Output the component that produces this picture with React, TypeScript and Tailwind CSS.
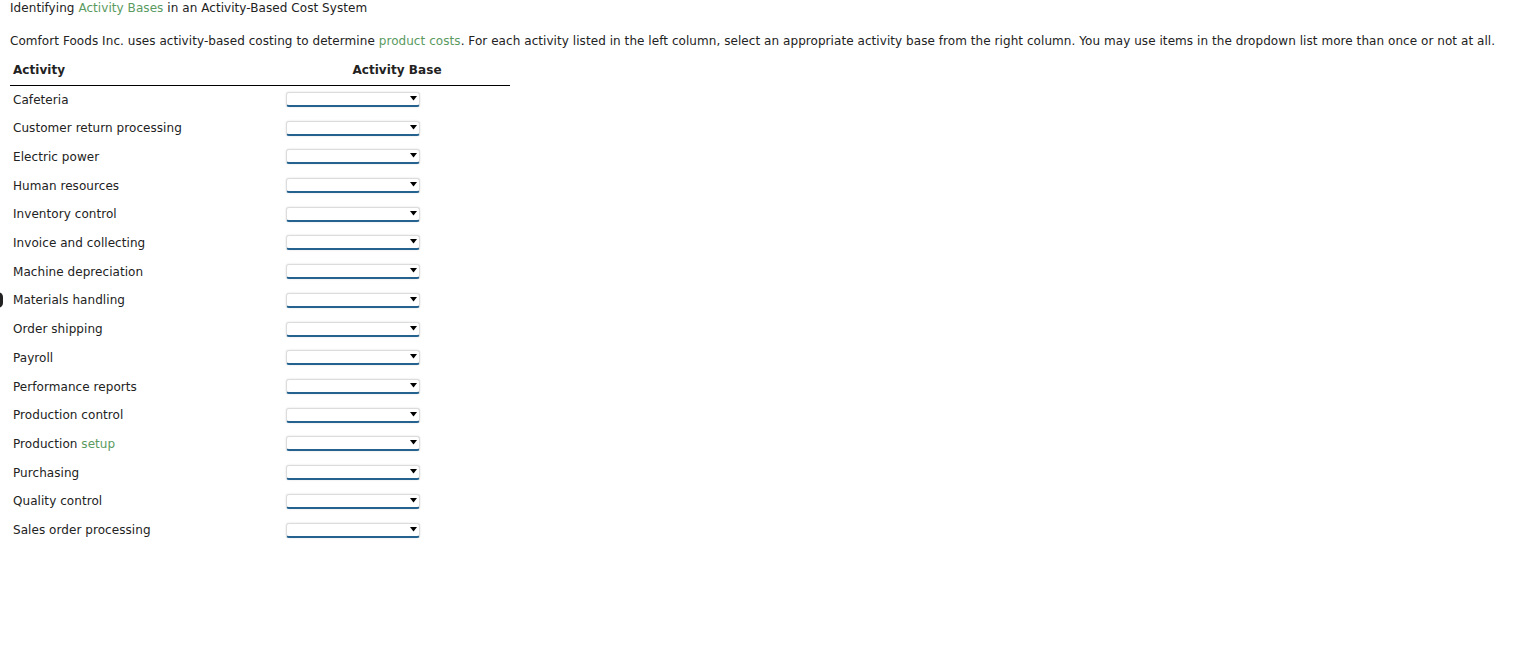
import React from 'react';

const activities = [
  'Cafeteria',
  'Customer return processing',
  'Electric power',
  'Human resources',
  'Inventory control',
  'Invoice and collecting',
  'Machine depreciation',
  'Materials handling',
  'Order shipping',
  'Payroll',
  'Performance reports',
  'Production control',
  'Production setup',
  'Purchasing',
  'Quality control',
  'Sales order processing',
];

function Select() {
  return (
    <div className="relative w-[134px] h-[15px] rounded-[3px] bg-white border border-[#dcdcdc] border-b-2 border-b-[#25628f] shadow-[0_0_2px_rgba(0,0,0,0.15)]">
      <svg className="absolute right-[2px] top-[3px]" width="7" height="5" viewBox="0 0 7 5">
        <path d="M0 0 L7 0 L3.5 4.5 Z" fill="#000" />
      </svg>
    </div>
  );
}

function Label({ name }: { name: string }) {
  if (name === 'Production setup') {
    return (
      <span>
        Production <span className="text-[#5a9a5f]">setup</span>
      </span>
    );
  }
  return <span>{name}</span>;
}

export default function App() {
  return (
    <div className="relative min-h-[646px] bg-white text-[#222] text-[12px] leading-[16px] tracking-[0.06px] font-['DejaVu_Sans','Verdana',sans-serif]">
      <div className="px-[10px]">
        <p>
          Identifying <span className="text-[#5a9a5f]">Activity Bases</span> in an Activity-Based Cost System
        </p>
        <p className="mt-[17px]">
          Comfort Foods Inc. uses activity-based costing to determine{' '}
          <span className="text-[#5a9a5f]">product costs</span>. For each activity listed in the left column, select an
          appropriate activity base from the right column. You may use items in the dropdown list more than once or not at
          all.
        </p>

        <table className="mt-[7px] w-[500px] border-collapse">
          <thead>
            <tr className="border-b border-black">
              <th className="h-[29px] text-left font-bold pl-[3px] w-[274px]">Activity</th>
              <th className="h-[29px] text-center font-bold">Activity Base</th>
            </tr>
          </thead>
          <tbody>
            {activities.map((a) => (
              <tr key={a} className="h-[28.73px]">
                <td className="pl-[3px] align-middle">
                  <Label name={a} />
                </td>
                <td className="pl-[2px] align-middle">
                  <Select />
                </td>
              </tr>
            ))}
          </tbody>
        </table>
      </div>
      <span className="absolute left-[-7px] top-[292px] w-[10px] h-[16px] rounded-full bg-[#222]" />
    </div>
  );
}
